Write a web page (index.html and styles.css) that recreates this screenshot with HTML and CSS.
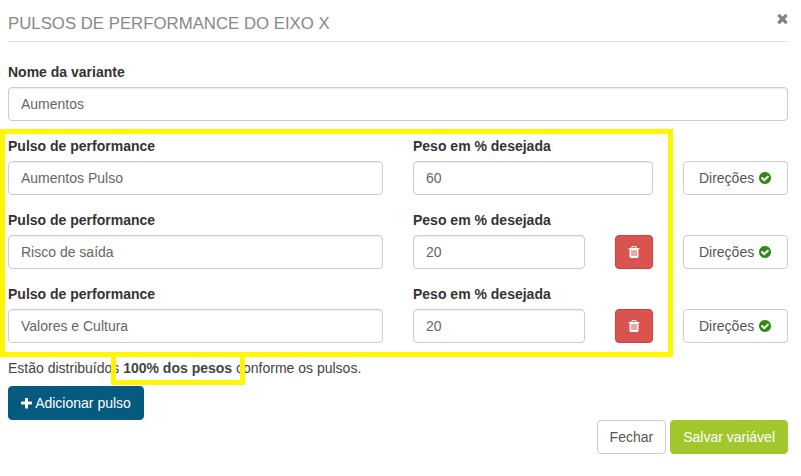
FILE: index.html
```html
<!DOCTYPE html>
<html lang="pt">
<head>
<meta charset="utf-8">
<title>Pulsos de performance do eixo X</title>
<link rel="stylesheet" href="styles.css">
</head>
<body>
<svg class="sprite" aria-hidden="true">
  <symbol id="i-check" viewBox="0 0 1792 1792"><path d="M1412 734q0-28-18-46l-91-90q-19-19-45-19t-45 19l-408 407-226-226q-19-19-45-19t-45 19l-91 90q-18 18-18 46 0 27 18 45l362 362q19 19 45 19 27 0 46-19l543-543q18-18 18-45zm252 162q0 209-103 385.500t-279.500 279.500-385.500 103-385.500-103-279.500-279.500-103-385.500 103-385.500 279.500-279.500 385.500-103 385.500 103 279.500 279.500 103 385.500z"/></symbol>
  <symbol id="i-trash" viewBox="0 0 1792 1792"><path d="M704 1376v-704q0-14-9-23t-23-9h-64q-14 0-23 9t-9 23v704q0 14 9 23t23 9h64q14 0 23-9t9-23zm256 0v-704q0-14-9-23t-23-9h-64q-14 0-23 9t-9 23v704q0 14 9 23t23 9h64q14 0 23-9t9-23zm256 0v-704q0-14-9-23t-23-9h-64q-14 0-23 9t-9 23v704q0 14 9 23t23 9h64q14 0 23-9t9-23zm-544-992h448l-48-117q-7-9-17-11h-317q-10 2-17 11zm928 32v64q0 14-9 23t-23 9h-96v948q0 83-47 143.500t-113 60.500h-832q-66 0-113-58.500t-47-141.500v-952h-96q-14 0-23-9t-9-23v-64q0-14 9-23t23-9h309l70-167q15-37 54-63t79-26h320q40 0 79 26t54 63l70 167h309q14 0 23 9t9 23z"/></symbol>
</svg>
<div class="modal">
  <header class="modal-header">
    <h4 class="modal-title">PULSOS DE PERFORMANCE DO EIXO X</h4>
    <svg class="close-icon" viewBox="0 0 1792 1792" aria-label="Fechar"><path d="M1490 1322q0 40-28 68l-136 136q-28 28-68 28t-68-28l-294-294-294 294q-28 28-68 28t-68-28l-136-136q-28-28-28-68t28-68l294-294-294-294q-28-28-28-68t28-68l136-136q28-28 68-28t68 28l294 294 294-294q28-28 68-28t68 28l136 136q28 28 28 68t-28 68l-294 294 294 294q28 28 28 68z"/></svg>
  </header>

  <div class="form-group">
    <label class="label">Nome da variante</label>
    <input class="input" type="text" value="Aumentos">
  </div>

  <div class="pulses">
    <div class="pulse-row">
      <div class="field">
        <label class="label">Pulso de performance</label>
        <input class="input" type="text" value="Aumentos Pulso">
      </div>
      <div class="field">
        <label class="label">Peso em % desejada</label>
        <input class="input" type="text" value="60">
      </div>
      <button class="btn btn-default btn-directions" type="button">Direções <svg class="check"><use href="#i-check"/></svg></button>
    </div>

    <div class="pulse-row">
      <div class="field">
        <label class="label">Pulso de performance</label>
        <input class="input" type="text" value="Risco de saída">
      </div>
      <div class="field weight-with-delete">
        <div class="weight-col">
          <label class="label">Peso em % desejada</label>
          <input class="input" type="text" value="20">
        </div>
        <button class="btn btn-danger" type="button" aria-label="Excluir"><svg class="trash"><use href="#i-trash"/></svg></button>
      </div>
      <button class="btn btn-default btn-directions" type="button">Direções <svg class="check"><use href="#i-check"/></svg></button>
    </div>

    <div class="pulse-row">
      <div class="field">
        <label class="label">Pulso de performance</label>
        <input class="input" type="text" value="Valores e Cultura">
      </div>
      <div class="field weight-with-delete">
        <div class="weight-col">
          <label class="label">Peso em % desejada</label>
          <input class="input" type="text" value="20">
        </div>
        <button class="btn btn-danger" type="button" aria-label="Excluir"><svg class="trash"><use href="#i-trash"/></svg></button>
      </div>
      <button class="btn btn-default btn-directions" type="button">Direções <svg class="check"><use href="#i-check"/></svg></button>
    </div>
    <div class="highlight-main"></div>
  </div>

  <p class="summary">Estão distribuídos <strong class="summary-strong">100% dos pesos</strong> conforme os pulsos.</p>

  <button class="btn btn-primary" type="button"><svg class="plus" viewBox="192 192 1408 1408"><path d="M1600 736v192q0 40-28 68t-68 28h-416v416q0 40-28 68t-68 28h-192q-40 0-68-28t-28-68v-416h-416q-40 0-68-28t-28-68v-192q0-40 28-68t68-28h416v-416q0-40 28-68t68-28h192q40 0 68 28t28 68v416h416q40 0 68 28t28 68z"/></svg>Adicionar pulso</button>

  <footer class="modal-footer">
    <button class="btn btn-default" type="button">Fechar</button>
    <button class="btn btn-success" type="button">Salvar variável</button>
  </footer>
</div>
</body>
</html>
```
FILE: styles.css
```css
*, *::before, *::after { box-sizing: border-box; }
html, body { margin: 0; padding: 0; background: #fff; }
body {
  font-family: "Liberation Sans", Arial, sans-serif;
  font-size: 14px;
  line-height: 20px;
  color: #333;
  overflow: hidden;
}
.sprite { display: none; }

.modal { width: 801px; height: 476px; padding: 0 13px 0 8px; }

.modal-header {
  display: flex;
  justify-content: space-between;
  height: 42px;
  border-bottom: 1px solid #e0e0e0;
  margin-bottom: 20px;
}
.modal-title {
  margin: 14px 0 0;
  font-size: 16.8px;
  font-weight: 400;
  line-height: 20px;
  color: #888;
}
.close-icon { width: 15px; height: 15px; margin: 11px -2px 0 0; fill: #808080; }

.form-group { margin-bottom: 15px; }
.label {
  display: block;
  font-weight: 700;
  line-height: 20px;
  margin-bottom: 5px;
}
.input {
  display: block;
  width: 100%;
  height: 34px;
  padding: 6px 12px;
  font: inherit;
  color: #666;
  background: #fff;
  border: 1px solid #ccc;
  border-radius: 4px;
  box-shadow: inset 0 1px 1px rgba(0, 0, 0, .075);
  outline: 0;
}

.pulses { position: relative; }
.pulse-row {
  display: grid;
  grid-template-columns: 375px 240px 105px;
  column-gap: 30px;
  align-items: end;
  margin-bottom: 15px;
}
.weight-with-delete { display: flex; align-items: flex-end; justify-content: space-between; }
.weight-col { width: 172px; }

.highlight-main {
  position: absolute;
  left: -8px;
  top: -7px;
  width: 673px;
  height: 228px;
  border: 5px solid #fff600;
  pointer-events: none;
}

.summary { margin: 0 0 8px; color: #444; }
.summary-strong { position: relative; }
.summary-strong::after {
  content: "";
  position: absolute;
  left: -12px;
  top: -8px;
  width: 134px;
  height: 33px;
  border: 5px solid #fff600;
}

.btn {
  display: inline-block;
  height: 34px;
  padding: 6px 12px;
  font: inherit;
  line-height: 20px;
  white-space: nowrap;
  border: 1px solid transparent;
  border-radius: 4px;
}
.btn-default { color: #555; background: #fff; border-color: #ccc; }
.btn-directions { width: 105px; padding: 6px 0; }
.btn-danger {
  display: flex;
  align-items: center;
  justify-content: center;
  width: 38px;
  padding: 0;
  background: #d9534f;
  border-color: #d43f3a;
}
.btn-primary {
  display: block;
  width: 136px;
  padding: 6px 0;
  color: #fff;
  background: #055a7f;
  border-color: #055a7f;
}
.btn-success {
  color: #fff;
  background: #a0c82d;
  border-color: #a0c82d;
}

.check { width: 14px; height: 14px; fill: #2d8a14; vertical-align: -2px; }
.trash { width: 14px; height: 14px; fill: #fff; }
.plus { width: 11px; height: 11px; margin-right: 3px; fill: #fff; vertical-align: -1px; }

.modal-footer { display: flex; justify-content: flex-end; gap: 4px; }
```
